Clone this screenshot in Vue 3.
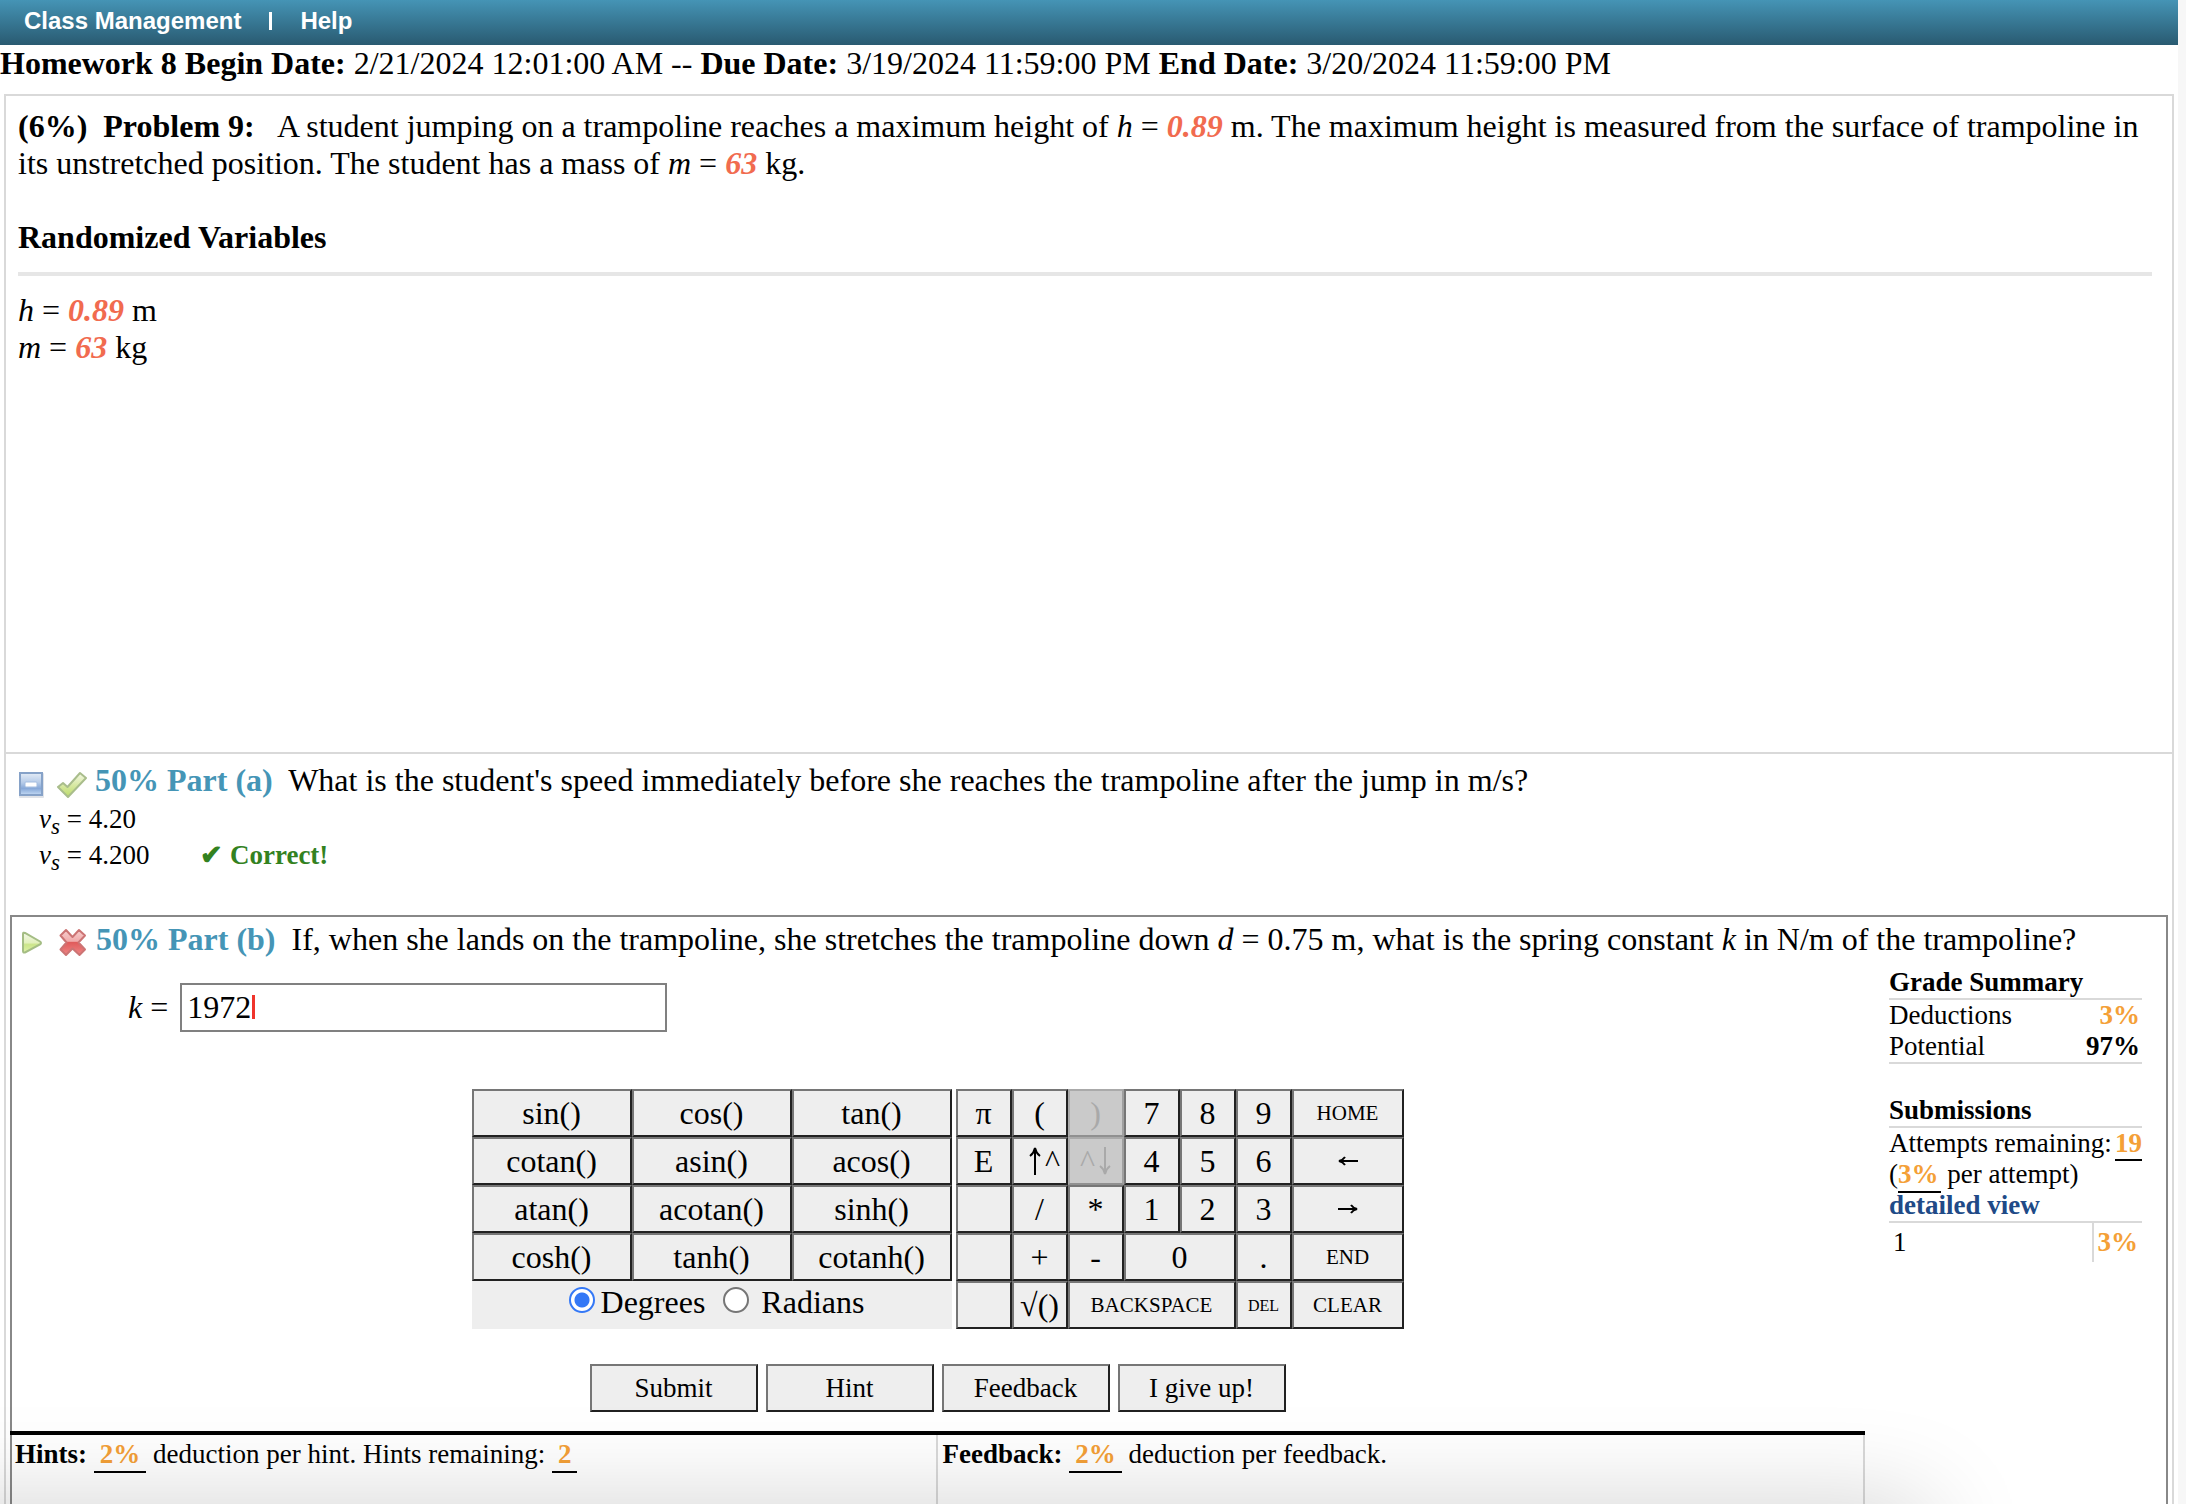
<script setup>
import { computed, ref } from 'vue'

const answer = ref('1972')
const angleMode = ref('degrees')

const functions = [
  'sin()', 'cos()', 'tan()',
  'cotan()', 'asin()', 'acos()',
  'atan()', 'acotan()', 'sinh()',
  'cosh()', 'tanh()', 'cotanh()',
]

const keys = [
  { label: 'π' },
  { label: '(' },
  { label: ')', disabled: true },
  { label: '7' },
  { label: '8' },
  { label: '9' },
  { label: 'HOME', size: 'word' },
  { label: 'E' },
  { label: '^', arrow: 'up', name: 'superscript' },
  { label: '^', arrow: 'down', name: 'end superscript', disabled: true },
  { label: '4' },
  { label: '5' },
  { label: '6' },
  { label: '', arrow: 'left', size: 'word', name: 'left' },
  { label: '', name: 'blank' },
  { label: '/' },
  { label: '*' },
  { label: '1' },
  { label: '2' },
  { label: '3' },
  { label: '', arrow: 'right', size: 'word', name: 'right' },
  { label: '', name: 'blank' },
  { label: '+' },
  { label: '-' },
  { label: '0', span: 2 },
  { label: '.' },
  { label: 'END', size: 'word' },
  { label: '', name: 'blank' },
  { label: '√()' },
  { label: 'BACKSPACE', size: 'word', span: 3 },
  { label: 'DEL', size: 'small' },
  { label: 'CLEAR', size: 'word' },
]

const arrows = {
  up: { width: 12, height: 30, d: 'M6 29 V2 M1 10 Q5 7 6 2 Q7 7 11 10' },
  down: { width: 12, height: 30, d: 'M6 1 V28 M1 20 Q5 23 6 28 Q7 23 11 20' },
  left: { width: 20, height: 10, d: 'M20 5 H1 M7 1 Q5 4 1 5 Q5 6 7 9' },
  right: { width: 20, height: 10, d: 'M0 5 H19 M13 1 Q15 4 19 5 Q15 6 13 9' },
}

const actions = ['Submit', 'Hint', 'Feedback', 'I give up!']

// every digit is half an em wide
const caretLeft = computed(() => `${8 + answer.value.length * 16}px`)

const press = (key) => {
  if (key.label === 'BACKSPACE') answer.value = answer.value.slice(0, -1)
  else if (key.label === 'CLEAR') answer.value = ''
  else if (!key.size) answer.value += key.label
}
</script>

<template>
  <div class="page">
    <nav class="menu">
      <a href="#">Class Management</a>
      <span class="menu__bar"></span>
      <a href="#">Help</a>
    </nav>

    <p class="dates">
      <b>Homework 8 Begin Date:</b> 2/21/2024 12:01:00 AM -- <b>Due Date:</b> 3/19/2024 11:59:00 PM
      <b>End Date:</b> 3/20/2024 11:59:00 PM
    </p>

    <main class="assignment">
      <section class="problem">
        <p>
          <b>(6%)&nbsp; Problem 9:</b> &nbsp; A student jumping on a trampoline reaches a maximum height of
          <i>h</i> = <em class="value">0.89</em> m. The maximum height is measured from the surface of
          trampoline in its unstretched position. The student has a mass of <i>m</i> =
          <em class="value">63</em> kg.
        </p>
        <h2>Randomized Variables</h2>
        <hr />
        <p><i>h</i> = <em class="value">0.89</em> m</p>
        <p><i>m</i> = <em class="value">63</em> kg</p>
      </section>

      <section class="part part--done">
        <div class="part__head">
          <button class="icon" aria-label="Collapse part (a)">
            <svg width="28" height="30" viewBox="0 0 28 30">
              <defs>
                <linearGradient id="minusFill" x1="0" y1="0" x2="0" y2="1">
                  <stop offset="0" stop-color="#e4ecf6" />
                  <stop offset="0.45" stop-color="#b4cae8" />
                  <stop offset="0.7" stop-color="#86a8d8" />
                  <stop offset="1" stop-color="#c4daf4" />
                </linearGradient>
              </defs>
              <rect x="2" y="4" width="25" height="25" rx="1" fill="#e0e3e8" />
              <rect x="3" y="4" width="22" height="22" fill="url(#minusFill)" stroke="#86a2c8" stroke-width="2" />
              <rect x="8" y="13" width="12" height="5" rx="1" fill="#fff" stroke="#a3bde0" />
            </svg>
          </button>
          <svg class="status" width="32" height="30" viewBox="0 0 32 30">
            <defs>
              <linearGradient id="checkFill" x1="0" y1="0" x2="0" y2="1">
                <stop offset="0" stop-color="#f3f7e4" />
                <stop offset="0.5" stop-color="#d8e9a4" />
                <stop offset="1" stop-color="#bbdb68" />
              </linearGradient>
            </defs>
            <path d="M3 18 L8 14 L12.500 18 L25 4 L31 9 L13 28 Z" fill="url(#checkFill)" stroke="#a9bd8c" stroke-width="2" stroke-linejoin="round" />
          </svg>
          <p>
            <b class="part__name">50% Part (a)</b>&nbsp; What is the student's speed immediately before she reaches
            the trampoline after the jump in m/s?
          </p>
        </div>
        <div class="results">
          <p><i>v<sub>s</sub></i> = 4.20</p>
          <p><i>v<sub>s</sub></i> = 4.200 <b class="correct">✔ Correct!</b></p>
        </div>
      </section>

      <section class="part part--open">
        <div class="part__head">
          <button class="icon" aria-label="Part (b)">
            <svg width="28" height="30" viewBox="0 0 28 30">
              <defs>
                <linearGradient id="playFill" x1="0" y1="0" x2="0" y2="1">
                  <stop offset="0" stop-color="#f4f8e8" />
                  <stop offset="0.5" stop-color="#e2f0bc" />
                  <stop offset="0.6" stop-color="#cbe58a" />
                  <stop offset="1" stop-color="#dff2a8" />
                </linearGradient>
              </defs>
              <path d="M5 6 Q5 4 7 5 L22 13.500 Q24 15 22 16.500 L7 24.500 Q5 25 5 23 Z" fill="url(#playFill)" stroke="#a4bd84" stroke-width="2" />
            </svg>
          </button>
          <svg class="status" width="32" height="30" viewBox="0 0 32 30">
            <defs>
              <linearGradient id="crossFill" x1="0" y1="0" x2="0" y2="1">
                <stop offset="0" stop-color="#f8d0d0" />
                <stop offset="0.45" stop-color="#f0aaaa" />
                <stop offset="0.5" stop-color="#e05c5c" />
                <stop offset="1" stop-color="#ee8585" />
              </linearGradient>
            </defs>
            <path d="M10 2 L16.500 9 L23 2 L29 7.500 L22.500 14.500 L29 21.500 L23.500 27 L16.500 20.500 L10 27 L4.500 21.500 L10.500 14.500 L4.500 7.500 Z" fill="url(#crossFill)" stroke="#cc7474" stroke-width="2" stroke-linejoin="round" />
          </svg>
          <p>
            <b class="part__name">50% Part (b)</b>&nbsp; If, when she lands on the trampoline, she stretches the
            trampoline down <i>d</i> = 0.75 m, what is the spring constant <i>k</i> in N/m of the trampoline?
          </p>
        </div>

        <div class="part__body">
          <div class="work">
            <div class="answer">
              <label for="answer"><i>k</i> =</label>
              <div class="answer__field">
                <input id="answer" v-model="answer" type="text" autocomplete="off" />
                <span class="answer__caret" :style="{ left: caretLeft }"></span>
              </div>
            </div>

            <div class="pads">
              <div class="pad pad--functions">
                <button v-for="fn in functions" :key="fn" class="key" @click="answer += fn">{{ fn }}</button>
                <div class="angle">
                  <label><input v-model="angleMode" type="radio" name="angle" value="degrees" />Degrees</label>
                  <label class="angle__radians"><input v-model="angleMode" type="radio" name="angle" value="radians" />Radians</label>
                </div>
              </div>
              <div class="pad pad--keys">
                <button
                  v-for="(key, i) in keys"
                  :key="i"
                  class="key"
                  :class="[
                    key.size && `key--${key.size}`,
                    key.span && `key--span${key.span}`,
                    key.arrow && `key--${key.arrow}`,
                  ]"
                  :disabled="key.disabled"
                  :aria-label="key.name"
                  @click="press(key)"
                >
                  <svg
                    v-if="key.arrow"
                    :width="arrows[key.arrow].width"
                    :height="arrows[key.arrow].height"
                  >
                    <path :d="arrows[key.arrow].d" fill="none" stroke="currentColor" stroke-width="2" />
                  </svg>
                  <span v-if="key.label">{{ key.label }}</span>
                </button>
              </div>
            </div>

            <div class="actions">
              <button v-for="action in actions" :key="action" class="key key--action">{{ action }}</button>
            </div>

            <div class="help">
              <p class="help__cell">
                <b>Hints:</b>&nbsp;<b class="amount amount--wide">2%</b>&nbsp;deduction per hint. Hints remaining:
                <b class="amount amount--wide">2</b>
              </p>
              <p class="help__cell">
                <b>Feedback:</b>&nbsp;<b class="amount amount--wide">2%</b>&nbsp;deduction per feedback.
              </p>
            </div>
          </div>

          <aside class="grades">
            <table class="grades__table">
              <caption>Grade Summary</caption>
              <tbody>
                <tr><th scope="row">Deductions</th><td class="orange">3%</td></tr>
                <tr><th scope="row">Potential</th><td>97%</td></tr>
              </tbody>
            </table>

            <h3>Submissions</h3>
            <p class="attempts">Attempts remaining: <b class="amount">19</b></p>
            <p>(<b class="amount amount--rate">3%</b> per attempt)</p>
            <p><a href="#">detailed view</a></p>
            <table class="log">
              <tbody>
                <tr><td>1</td><td class="log__cost orange">3%</td></tr>
              </tbody>
            </table>
          </aside>
        </div>
      </section>
    </main>

    <div class="dock-shadow"></div>
  </div>
</template>

<style>
body {
  background: #fff;
}
</style>

<style scoped>
.page {
  position: relative;
  min-height: 100vh;
  overflow: hidden;
  border-right: 8px solid #f7f7f7;
  box-sizing: border-box;
  display: flex;
  flex-direction: column;
  font-family: "Liberation Serif", "Times New Roman", serif;
  font-size: 32px;
  line-height: 37px;
  color: #000;
}

p,
h2,
h3 {
  margin: 0;
  font-size: inherit;
}

button,
input {
  font-family: inherit;
  margin: 0;
}

.menu {
  flex: none;
  height: 45px;
  padding: 0 24px 4px;
  box-sizing: border-box;
  display: flex;
  align-items: center;
  gap: 28px;
  background: linear-gradient(#4594b5, #295a71);
  font-family: "Liberation Sans", Arial, sans-serif;
  font-size: 24px;
  font-weight: bold;
}

.menu a {
  color: #fff;
  text-decoration: none;
}

.menu__bar {
  width: 3px;
  height: 18px;
  background: #fff;
}

.dates {
  flex: none;
}

.assignment {
  flex: 1 0 auto;
  display: flex;
  flex-direction: column;
  margin: 12px 4px 0;
  border: 2px solid #d9d9d9;
  border-bottom: 0;
}

.problem {
  min-height: 644px;
  padding: 12px 20px 0 12px;
}

.problem h2 {
  margin-top: 37px;
}

.problem hr {
  height: 4px;
  margin: 16px 0;
  border: 0;
  background: #e6e6e6;
}

.value {
  color: #f16b4f;
  font-weight: bold;
}

.part__head {
  display: flex;
  align-items: flex-start;
}

.part__name {
  color: #4595b6;
}

.icon {
  flex: none;
  width: 28px;
  height: 37px;
  padding: 7px 0 0;
  border: 0;
  background: none;
}

.icon svg,
.status {
  display: block;
}

.status {
  flex: none;
  margin: 7px 8px 0 10px;
}

.part--done {
  min-height: 153px;
  padding: 8px 11px 0;
  border-top: 2px solid #d9d9d9;
}

.results {
  padding: 2px 0 0 22px;
  font-size: 27px;
  line-height: 36px;
}

.results sub {
  font-size: 23px;
  line-height: 0;
}

.correct {
  margin-left: 44px;
  color: #33821f;
}

.part--open {
  flex: 1;
  display: flex;
  flex-direction: column;
  margin: 0 4px;
  padding-top: 4px;
  border: 2px solid #888;
  border-bottom: 0;
}

.part--open .part__head {
  padding-left: 6px;
}

.part__body {
  flex: 1;
  display: grid;
  grid-template-columns: 1fr 253px;
  gap: 24px;
  padding-right: 24px;
}

.work {
  display: flex;
  flex-direction: column;
  padding-top: 25px;
}

.answer {
  display: flex;
  align-items: center;
  gap: 12px;
  padding-left: 116px;
}

.answer__field {
  position: relative;
}

.answer input {
  display: block;
  width: 487px;
  height: 49px;
  padding: 0 5px;
  box-sizing: border-box;
  border: 2px solid #808080;
  background: #fff;
  font-size: 32px;
  color: #000;
  outline: 0;
}

.answer__caret {
  position: absolute;
  top: 12px;
  width: 3px;
  height: 24px;
  background: #f0342b;
}

.pads {
  display: flex;
  justify-content: center;
  gap: 4px;
  margin-top: 57px;
  padding-right: 2px;
}

.pad {
  display: grid;
  grid-auto-rows: 48px;
}

.pad--functions {
  grid-template-columns: repeat(3, 160px);
  background: #eee;
}

.pad--keys {
  grid-template-columns: repeat(6, 56px) 112px;
}

.key {
  display: flex;
  align-items: center;
  justify-content: center;
  gap: 4px;
  padding: 0;
  overflow: hidden;
  border: 2px solid;
  border-color: #767676 #212121 #212121 #767676;
  border-radius: 0;
  background: #eee;
  color: #000;
  font-size: 32px;
  line-height: 37px;
  white-space: nowrap;
}

.key:disabled {
  border-color: #aaa #a0a0a0 #909090 #aaa;
  background: #cacaca;
  color: #a9a9a9;
}

.key svg {
  flex: none;
}

.key--up {
  padding-left: 10px;
}

.key--down {
  flex-direction: row-reverse;
}

.key--word {
  font-size: 21px;
}

.key--small {
  font-size: 16px;
}

.key--span2 {
  grid-column: span 2;
}

.key--span3 {
  grid-column: span 3;
}

.angle {
  grid-column: 1 / -1;
  display: flex;
  justify-content: center;
  align-items: flex-start;
  gap: 18px;
  padding: 3px 0 0 10px;
}

.angle label {
  display: flex;
  align-items: flex-start;
  gap: 6px;
}

.angle label.angle__radians {
  gap: 12px;
}

.angle input {
  appearance: none;
  width: 26px;
  height: 26px;
  margin-top: 3px;
  border: 2px solid #767676;
  border-radius: 50%;
  background: #fff;
}

.angle input:checked {
  border-color: #3478f6;
  background: radial-gradient(circle, #3478f6 7px, #fff 8px);
}

.actions {
  display: flex;
  justify-content: center;
  gap: 8px;
  margin-top: 35px;
  padding-right: 2px;
}

.key--action {
  width: 168px;
  height: 48px;
  font-size: 27px;
}

.help {
  flex: 1;
  display: grid;
  grid-template-columns: 1fr 1fr;
  margin: 19px 0 0 -2px;
  border-top: 4px solid #000;
}

.help__cell {
  padding: 4px 5px;
  border-right: 2px solid #d9d9d9;
  font-size: 27px;
  line-height: 31px;
}

.amount {
  padding-bottom: 2px;
  border-bottom: 2px solid #000;
  color: #f4a037;
}

.amount--wide {
  padding: 0 6px 2px;
}

.amount--rate {
  padding-right: 2px;
}

.grades {
  padding-top: 9px;
  font-size: 27px;
  line-height: 31px;
}

.grades table {
  width: 100%;
  border-collapse: collapse;
}

.grades caption,
.grades h3 {
  border-bottom: 2px solid #d9d9d9;
  font-weight: bold;
  text-align: left;
}

.grades__table tbody {
  border-bottom: 2px solid #d9d9d9;
}

.grades th,
.grades td {
  padding: 0;
  font-weight: normal;
  text-align: left;
}

.grades .grades__table td {
  padding-right: 2px;
  font-weight: bold;
  text-align: right;
}

.grades h3 {
  margin-top: 31px;
}

.attempts {
  display: flex;
  justify-content: space-between;
  height: 31px;
  white-space: nowrap;
}

.attempts .amount {
  height: 31px;
  padding: 0;
}

.grades a {
  color: #204a87;
  font-weight: bold;
  text-decoration: none;
}

.log {
  border-top: 2px solid #d9d9d9;
}

.grades .log td {
  padding: 4px;
}

.grades .log .log__cost {
  width: 40px;
  border-left: 2px solid #d9d9d9;
}

.grades .orange {
  color: #f4a037;
  font-weight: bold;
}

.dock-shadow {
  position: absolute;
  left: -200px;
  right: 250px;
  top: 100%;
  height: 100px;
  box-shadow: 0 0 100px rgba(0, 0, 0, 0.18);
  pointer-events: none;
}
</style>
